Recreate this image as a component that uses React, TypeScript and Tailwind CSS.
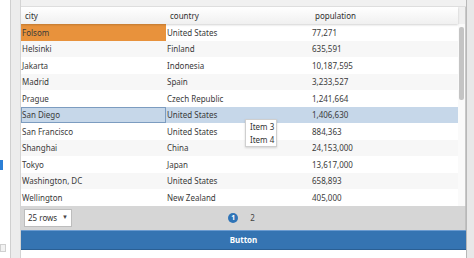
import React from 'react';

const rows: [string, string, string][] = [
  ['Folsom', 'United States', '77,271'],
  ['Helsinki', 'Finland', '635,591'],
  ['Jakarta', 'Indonesia', '10,187,595'],
  ['Madrid', 'Spain', '3,233,527'],
  ['Prague', 'Czech Republic', '1,241,664'],
  ['San Diego', 'United States', '1,406,630'],
  ['San Francisco', 'United States', '884,363'],
  ['Shanghai', 'China', '24,153,000'],
  ['Tokyo', 'Japan', '13,617,000'],
  ['Washington, DC', 'United States', '658,893'],
  ['Wellington', 'New Zealand', '405,000'],
];

export default function App() {
  return (
    <div
      className="relative flex w-[474px] h-[258px] bg-white text-[8px] leading-[11px] text-[#3a3a3a] overflow-hidden"
      style={{ fontFamily: '"Noto Sans", "Open Sans", sans-serif' }}
    >
      {/* left side panels */}
      <div className="w-[11px] shrink-0 border-r border-[#cfcfcf] bg-white flex flex-col">
        <div className="h-[160px] shrink-0" />
        <div className="h-[10px] w-[3px] shrink-0 bg-[#2b7fd6]" />
        <div className="flex-1" />
        <div className="h-[8px] w-[6px] mb-[6px] shrink-0 border border-[#d0d0d0] bg-[#f2f2f2]" />
      </div>
      <div className="w-[10px] shrink-0 border-r border-[#d4d4d4] bg-[#ececec]" />

      {/* main grid */}
      <div className="w-[445px] shrink-0 flex flex-col">
        <div className="h-[7px] shrink-0 bg-[#f1f1f1] border-b border-[#dedede]" />
        <div className="flex h-[198.5px] shrink-0 overflow-hidden">
          <div className="flex-1 flex flex-col">
            {/* header */}
            <div className="flex h-[17px] shrink-0 items-center bg-gradient-to-b from-[#ffffff] to-[#f0f0f0] text-[#2e2e2e] shadow-[0_1px_2px_rgba(0,0,0,0.18)] relative z-10">
              <div className="w-[145px] pl-[4px]">city</div>
              <div className="w-[145px] pl-[4px]">country</div>
              <div className="flex-1 pl-[4px]">population</div>
            </div>
            {/* rows */}
            {rows.map((r, i) => {
              const selected = i === 5;
              const stripe = i % 2 === 1 ? 'bg-[#f7f7f7]' : 'bg-white';
              return (
                <div
                  key={r[0]}
                  className={`flex h-[16.5px] shrink-0 items-center ${selected ? 'bg-[#c6d7e9]' : stripe}`}
                >
                  <div
                    className={`w-[145px] h-full flex items-center ${
                      i === 0 ? 'bg-[#e8923c]' : ''
                    } ${selected ? 'border border-[#7c9cc0] pl-0' : 'pl-[1px]'}`}
                  >
                    {r[0]}
                  </div>
                  <div className="w-[145px] pl-[1px]">{r[1]}</div>
                  <div className="flex-1 pl-[1px]">{r[2]}</div>
                </div>
              );
            })}
          </div>
          {/* scrollbar */}
          <div className="w-[8px] shrink-0 flex flex-col bg-[#fafafa] border-r border-[#c8c8c8]">
            <div className="h-[17px] shrink-0 bg-[#f0f0f0]" />
            <div className="h-[3px] shrink-0" />
            <div className="h-[73px] w-[5px] shrink-0 ml-[1px] rounded-[2px] bg-[#c4c4c4]" />
          </div>
        </div>
        {/* footer */}
        <div className="h-[24px] shrink-0 bg-[#d6d6d6] grid grid-cols-[1fr_auto_1fr] items-center px-[3px] border-r border-[#c0c0c0]">
          <div className="w-[48px] h-[18px] bg-white border border-[#bdbdbd] flex items-center justify-between px-[3px] text-[#333]">
            <span>25 rows</span>
            <span className="text-[6px] text-[#444]">▼</span>
          </div>
          <div className="flex items-center gap-[12px] -ml-[3px]">
            <div className="w-[10px] h-[10px] rounded-full bg-[#2f74b7] text-white text-[7px] flex items-center justify-center font-bold">
              1
            </div>
            <div className="text-[#444]">2</div>
          </div>
          <div />
        </div>
        {/* button */}
        <div className="h-[20px] shrink-0 bg-[#3574b2] border-t border-[#6b9bd0] border-b border-b-[#2a5f94] flex items-center justify-center text-white font-bold text-[8px]">
          Button
        </div>
        <div className="flex-1 bg-white" />
      </div>

      {/* right strip */}
      <div className="flex-1 border-l border-[#b8b8b8] bg-[#e8e8e8]" />

      {/* popup menu */}
      <div className="absolute left-[245px] top-[119px] w-[32px] h-[28px] bg-white border border-[#cfcfcf] shadow-[0_1px_2px_rgba(0,0,0,0.15)] flex flex-col justify-center pl-[4px] gap-[2px] text-[#333]">
        <div>Item 3</div>
        <div>Item 4</div>
      </div>
    </div>
  );
}
